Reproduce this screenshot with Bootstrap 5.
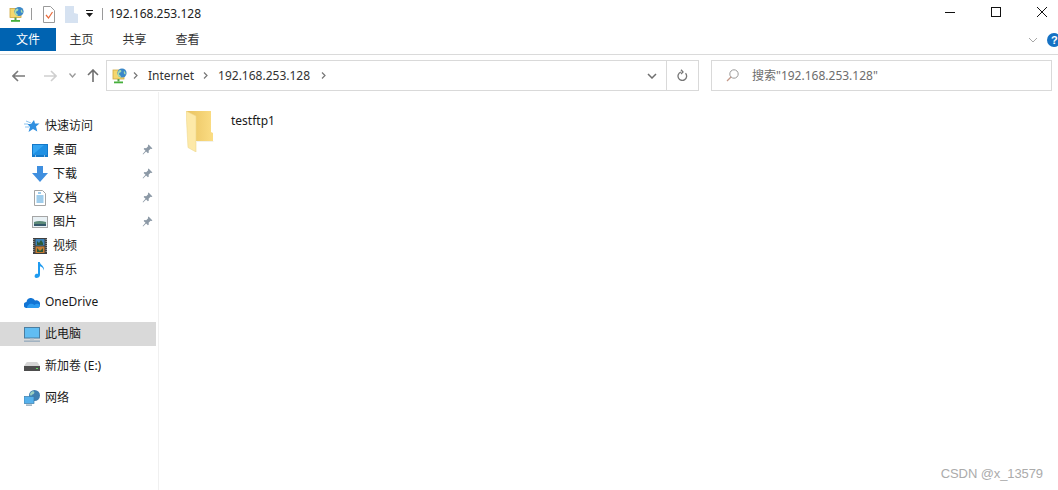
<!DOCTYPE html>
<html lang="zh-CN">
<head>
<meta charset="utf-8">
<title>192.168.253.128</title>
<link rel="stylesheet" href="https://cdn.jsdelivr.net/npm/bootstrap@5.3.0/dist/css/bootstrap.min.css">
<style>
html,body{height:490px;overflow:hidden;background:#fff}
body{font-family:"Noto Sans","Noto Sans CJK SC",sans-serif;font-size:12px;color:#1a1a1a;line-height:16px}
svg{display:block;flex:none}
.win-title{height:28px;padding-left:9px}
.title-sep{width:1px;height:12px;background:#9a9a9a}
.sep-a{margin-left:6px}
.doc-a{margin-left:11px}
.page-a{margin-left:10px}
.drop-a{margin-left:8px}
.sep-b{margin-left:8px}
.title-text{margin-left:6px;color:#222}
.win-group{margin-right:-7px}
.win-btn{width:46px;height:24px}
.tabs-row{height:23px}
.file-tab{width:56px;height:23px;background:#0063b1;color:#fff;padding-top:1px}
.rib-tab{width:53px;height:23px;color:#333;padding-top:1px}
.rib-first{margin-left:-1px}
.rib-line{height:3px}
.rib-rule{height:1px;background:#dadada}
.help-wrap{gap:8px;padding-left:10px;overflow:hidden;width:40px}
.addr-row{height:37px;padding-top:5px;padding-left:12px}
.nav-icons{width:94px;height:31px}
.nav-fwd{margin-left:17px}
.nav-down{margin-left:12px}
.nav-up{margin-left:11px}
.addr-box{width:593px;height:31px;border:1px solid #d9d9d9;padding-left:5px}
.chev-first{margin-left:5px}
.addr-seg{color:#333;margin:0 9px 0 10px}
.addr-ip{margin-right:11px}
.addr-end{width:32px;height:29px;border-left:1px solid #d9d9d9}
.addr-drop{margin-left:auto;padding-right:9px}
.search-box{width:341px;height:31px;margin-left:12px;border:1px solid #d9d9d9;padding-left:14px;color:#6d6d6d}
.search-text{margin-left:13px}
.main-area{height:398px}
.side-pane{width:159px;border-right:1px solid #f0f0f0;padding-top:22px}
.side-group{margin-bottom:8px}
.side-item{height:24px;width:156px;color:#1a1a1a;position:relative}
.side-item.lvl0{padding-left:24px;gap:5px}
.side-item.lvl1{padding-left:32px;gap:5px}
.side-item.active-row{background:#d9d9d9}
.pin-mark{position:absolute;left:142px;top:6px}
.file-pane{padding:19px 0 0 27px}
.file-name{margin-left:17px;margin-top:2px;color:#1a1a1a}
.mark-text{position:absolute;right:15px;bottom:8px;font-family:"Liberation Sans",sans-serif;font-size:13px;color:#ababab;letter-spacing:-.1px}
</style>
</head>
<body>
<svg width="0" height="0" class="position-absolute">
<defs>
<linearGradient id="fold-grad" x1="0" x2="1" y1="0" y2="0"><stop offset="0" stop-color="#e9c25f"/><stop offset="1" stop-color="#fbdd84"/></linearGradient>
<symbol id="net" viewBox="0 0 16 16">
<rect x="1" y="2" width="11" height="9" fill="#f5d76e" stroke="#cfa93f" stroke-width=".8"/>
<circle cx="10" cy="5" r="4.6" fill="#3b88c9"/><path d="M7 2.500c2-1.500 3 .5 2 1.500s-2 .5-2 2 2 1 2 3c-2 .5-3-1-3.500-2.500.1-1.500.7-3 1.500-4zM12 3c1 .5 2 2 1.500 3.500-1 0-2.200-1-1.500-3.500z" fill="#a8dcae"/>
<rect x="5.500" y="11" width="2" height="2.500" fill="#5aa14a"/><rect x="2" y="13.500" width="9" height="1.800" fill="#46b03c"/>
</symbol>
<symbol id="pin" viewBox="0 0 10 10">
<path d="M6 .5 9.500 4l-1 .6-.7-.2L6 6.200l.2 1.600-.8.700-1.700-1.700L1 9.500.6 9l2.600-2.800L1.500 4.500l.7-.8 1.600.2L5.600 2l-.2-.8z" fill="#8c99a6"/>
</symbol>
<symbol id="folder-big" viewBox="0 0 28 41">
<path d="M0 0h25v21l2 1v8H9z" fill="url(#fold-grad)"/>
<path d="M0 0l10 5v36l-8-4.500z" fill="#fde9a8" stroke="#efd88f" stroke-width=".6"/>
<path d="M10 30h17.500v1H10z" fill="#f1f1ec"/>
</symbol>
</defs>
</svg>

<div class="d-flex align-items-center win-title">
  <svg width="16" height="17"><use href="#net"/></svg>
  <span class="title-sep sep-a"></span>
  <svg class="doc-a" width="12" height="17" viewBox="0 0 12 17"><path d="M.5.500h7l4 4v12H.5z" fill="#fff" stroke="#9a9a9a"/><path d="M3 9l2.500 3L9.500 6" fill="none" stroke="#e8693a" stroke-width="1.200"/></svg>
  <svg class="page-a" width="13" height="17" viewBox="0 0 13 17"><path d="M0 0h9v7l4 1v9H0z" fill="#d6e2f1"/></svg>
  <svg class="drop-a" width="8" height="8" viewBox="0 0 8 8"><path d="M0 0h7v1H0zM0 3h7L3.500 7z" fill="#1a1a1a"/></svg>
  <span class="title-sep sep-b"></span>
  <span class="title-text">192.168.253.128</span>
  <div class="ms-auto d-flex align-self-start win-group">
    <div class="win-btn d-flex align-items-center justify-content-center"><svg width="10" height="10"><rect x="0" y="5" width="10" height="1" fill="#111"/></svg></div>
    <div class="win-btn d-flex align-items-center justify-content-center"><svg width="10" height="10"><rect x=".5" y=".5" width="9" height="9" fill="none" stroke="#111"/></svg></div>
    <div class="win-btn d-flex align-items-center justify-content-center"><svg width="10" height="10"><path d="M0 0l10 10M10 0 0 10" stroke="#111" stroke-width="1"/></svg></div>
  </div>
</div>

<div class="d-flex tabs-row">
  <div class="file-tab d-flex align-items-center justify-content-center">文件</div>
  <div class="rib-tab rib-first d-flex align-items-center justify-content-center">主页</div>
  <div class="rib-tab d-flex align-items-center justify-content-center">共享</div>
  <div class="rib-tab d-flex align-items-center justify-content-center">查看</div>
  <div class="ms-auto d-flex align-items-center help-wrap">
    <svg width="10" height="6" viewBox="0 0 10 6"><path d="M1 1l4 4 4-4" fill="none" stroke="#a8a8a8"/></svg>
    <svg width="22" height="16" viewBox="0 0 22 16"><circle cx="8" cy="8" r="7" fill="#1672c4"/><text x="5" y="12" font-family="Liberation Sans" font-size="11" font-weight="700" fill="#fff">?</text></svg>
  </div>
</div>
<div class="rib-line"></div>
<div class="rib-rule"></div>

<div class="d-flex addr-row">
  <div class="d-flex align-items-center nav-icons">
    <svg width="14" height="12" viewBox="0 0 14 12"><path d="M6 1 1 6l5 5M1 6h12" fill="none" stroke="#7a7a7a" stroke-width="1.600"/></svg>
    <svg class="nav-fwd" width="14" height="12" viewBox="0 0 14 12"><path d="M8 1l5 5-5 5M13 6H1" fill="none" stroke="#cfcfcf" stroke-width="1.600"/></svg>
    <svg class="nav-down" width="7" height="5" viewBox="0 0 7 5"><path d="M.5.500 3.500 4l3-3.500" fill="none" stroke="#9a9a9a" stroke-width="1.300"/></svg>
    <svg class="nav-up" width="12" height="14" viewBox="0 0 12 14"><path d="M1 6l5-5 5 5M6 1v12" fill="none" stroke="#6f6f6f" stroke-width="1.600"/></svg>
  </div>
  <div class="d-flex align-items-center addr-box">
    <svg width="16" height="16"><use href="#net"/></svg>
    <svg class="chev-first" width="5" height="7" viewBox="0 0 5 7"><path d="M1 .5l3 3-3 3" fill="none" stroke="#777" stroke-width="1.200"/></svg>
    <span class="addr-seg">Internet</span>
    <svg width="5" height="7" viewBox="0 0 5 7"><path d="M1 .5l3 3-3 3" fill="none" stroke="#777" stroke-width="1.200"/></svg>
    <span class="addr-seg addr-ip">192.168.253.128</span>
    <svg width="5" height="7" viewBox="0 0 5 7"><path d="M1 .5l3 3-3 3" fill="none" stroke="#777" stroke-width="1.200"/></svg>
    <div class="addr-drop"><svg width="10" height="6" viewBox="0 0 10 6"><path d="M1 1l4 4 4-4" fill="none" stroke="#6f6f6f" stroke-width="1.500"/></svg></div>
    <div class="addr-end d-flex align-items-center justify-content-center"><svg width="11" height="13" viewBox="0 0 11 13"><path d="M8.500 4.200A4.300 4.300 0 1 1 4 3M4 .8 6 3 4 5" fill="none" stroke="#777" stroke-width="1.300"/></svg></div>
  </div>
  <div class="d-flex align-items-center search-box">
    <svg width="13" height="13" viewBox="0 0 13 13"><circle cx="8" cy="5" r="4.200" fill="none" stroke="#9a9a9a"/><path d="M5 8l-4 4" stroke="#c49a8a" stroke-width="1.200"/></svg>
    <span class="search-text">搜索"192.168.253.128"</span>
  </div>
</div>

<div class="d-flex main-area">
  <nav class="side-pane">
    <div class="side-group">
      <div class="side-item lvl0 d-flex align-items-center">
        <svg width="16" height="14" viewBox="0 0 16 14"><path d="M10 1l1 3.500h4.500l-3.500 3 1.300 5L9 10l-4.500 3L6 8 3.500 5H7z" fill="#2f8fe0"/><path d="M2 2l5 2M0 5h4M1 8h4" stroke="#8cc4ef"/></svg>
        <span>快速访问</span>
      </div>
      <div class="side-item lvl1 d-flex align-items-center">
        <svg width="16" height="13" viewBox="0 0 16 13"><rect width="16" height="13" fill="#1479c9"/><rect x="1" y="1" width="14" height="9.500" fill="#36a6f2"/><path d="M1 10.500 12 1h3v9.500z" fill="#1f90e3"/><rect x="3" y="11.500" width="1" height="1" fill="#fff"/><rect x="12" y="11.500" width="1" height="1" fill="#fff"/></svg>
        <span>桌面</span><svg class="pin-mark" width="11" height="11"><use href="#pin"/></svg>
      </div>
      <div class="side-item lvl1 d-flex align-items-center">
        <svg width="16" height="16" viewBox="0 0 16 16"><path d="M5 0h6v7h5l-8 9-8-9h5z" fill="#3f8fdf"/></svg>
        <span>下载</span><svg class="pin-mark" width="11" height="11"><use href="#pin"/></svg>
      </div>
      <div class="side-item lvl1 d-flex align-items-center">
        <svg width="16" height="16" viewBox="0 0 16 16"><path d="M2.500.5h8l3 3v12h-11z" fill="#fff" stroke="#a5a5a5"/><path d="M6 3h3M4.500 6h7M4.500 8h7M4.500 10h7M4.500 12h7" stroke="#3f9ad8"/></svg>
        <span>文档</span><svg class="pin-mark" width="11" height="11"><use href="#pin"/></svg>
      </div>
      <div class="side-item lvl1 d-flex align-items-center">
        <svg width="16" height="12" viewBox="0 0 16 12"><rect x=".5" y=".5" width="15" height="11" fill="#e9f1f5" stroke="#a5a5a5"/><path d="M2 6c4-1.500 8-1 12 0v4H2z" fill="#5d8a78"/><path d="M2 8h12v2H2z" fill="#35586a"/></svg>
        <span>图片</span><svg class="pin-mark" width="11" height="11"><use href="#pin"/></svg>
      </div>
      <div class="side-item lvl1 d-flex align-items-center">
        <svg width="16" height="16" viewBox="0 0 16 16"><rect x="1" width="14" height="16" fill="#3f3f3f"/><rect x="3.500" y="1" width="9" height="6.500" fill="#3d82b8"/><rect x="3.500" y="8.500" width="9" height="6.500" fill="#c77b32"/><path d="M5 3l2 2 2-3 2 3v2H5zM5 10l3 3 3-3v4H5z" fill="#2a5a3a"/><path d="M1.800 1v14M14.200 1v14" stroke="#ddd" stroke-width=".8" stroke-dasharray="1 1"/></svg>
        <span>视频</span>
      </div>
      <div class="side-item lvl1 d-flex align-items-center">
        <svg width="16" height="16" viewBox="0 0 16 16"><path d="M6 0h1.800c.3 3 4.700 3.500 4.200 8.500-.7-2.500-2.500-3.800-4-4.200V13c0 2-2 3-3.500 3S2.200 14.500 2.800 13.200 5 11.500 6 12z" fill="#1f9bf0"/></svg>
        <span>音乐</span>
      </div>
    </div>
    <div class="side-group">
      <div class="side-item lvl0 d-flex align-items-center">
        <svg width="16" height="11" viewBox="0 0 16 11"><path d="M3 11a3 3 0 0 1-.5-6A4.500 4.500 0 0 1 11 3.500 3.800 3.800 0 0 1 16 8c0 2-1.500 3-2.500 3z" fill="#1174d4"/><path d="M3 11h10.500c1 0 2.500-1 2.500-3-2-2-4-1.500-5.500 0C8 6 5 7 4.500 8 3.500 8.500 3 10 3 11z" fill="#2a9af0"/></svg>
        <span>OneDrive</span>
      </div>
    </div>
    <div class="side-group">
      <div class="side-item active-row lvl0 d-flex align-items-center">
        <svg width="16" height="15" viewBox="0 0 16 15"><rect x=".5" y=".5" width="15" height="10.500" fill="#61bdf2" stroke="#4a7da0"/><path d="M6 11h4v1.500H6z" fill="#a0b4c4"/><rect y="13.500" width="16" height="1.300" fill="#93a9bb"/></svg>
        <span>此电脑</span>
      </div>
    </div>
    <div class="side-group">
      <div class="side-item lvl0 d-flex align-items-center">
        <svg width="16" height="9" viewBox="0 0 16 9"><path d="M2 1c0-.5 1-1 2-1h8c1 0 2 .5 2 1l2 3H0z" fill="#d5d5d5"/><rect y="4" width="16" height="5" fill="#4d4d4d"/><rect x="12" y="6" width="2" height="1" fill="#5fdc5f"/></svg>
        <span>新加卷 (E:)</span>
      </div>
    </div>
    <div class="side-group">
      <div class="side-item lvl0 d-flex align-items-center">
        <svg width="16" height="16" viewBox="0 0 16 16"><circle cx="10.500" cy="5.500" r="5.500" fill="#3f7fb0"/><path d="M8 1.500c2-1 3 .5 2 2s-2 .5-2.500 2c-1 .5-1.500-.5-1.500-1.500.4-1 1-2 2-2.500z" fill="#9ad0c0"/><rect y="6.500" width="10" height="7" fill="#56b1ec" stroke="#3b7ca8" stroke-width=".7"/><rect x="2" y="14.500" width="6" height="1.200" fill="#7d9bb0"/></svg>
        <span>网络</span>
      </div>
    </div>
  </nav>
  <section class="file-pane flex-grow-1">
    <div class="d-flex align-items-start">
      <svg width="28" height="41"><use href="#folder-big"/></svg>
      <span class="file-name">testftp1</span>
    </div>
  </section>
</div>
<div class="mark-text">CSDN @x_13579</div>
<script src="https://cdn.jsdelivr.net/npm/bootstrap@5.3.0/dist/js/bootstrap.bundle.min.js"></script>
</body>
</html>
